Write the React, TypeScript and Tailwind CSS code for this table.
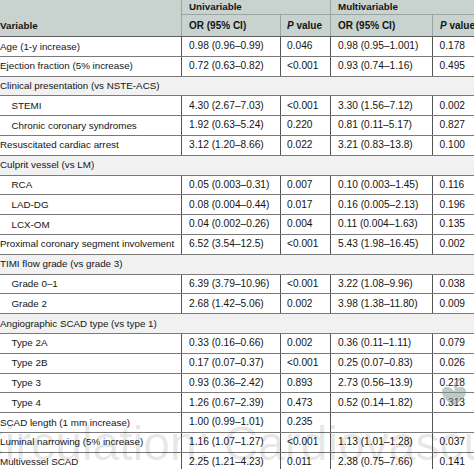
import { clsx } from 'clsx';

type Row =
  | { kind: 'section'; label: string }
  | { kind: 'data'; label: string; indent?: boolean; u: string; up: string; m: string; mp: string };

const rows: Row[] = [
  { kind: 'data', label: 'Age (1-y increase)', u: '0.98 (0.96–0.99)', up: '0.046', m: '0.98 (0.95–1.001)', mp: '0.178' },
  { kind: 'data', label: 'Ejection fraction (5% increase)', u: '0.72 (0.63–0.82)', up: '<0.001', m: '0.93 (0.74–1.16)', mp: '0.495' },
  { kind: 'section', label: 'Clinical presentation (vs NSTE-ACS)' },
  { kind: 'data', indent: true, label: 'STEMI', u: '4.30 (2.67–7.03)', up: '<0.001', m: '3.30 (1.56–7.12)', mp: '0.002' },
  { kind: 'data', indent: true, label: 'Chronic coronary syndromes', u: '1.92 (0.63–5.24)', up: '0.220', m: '0.81 (0.11–5.17)', mp: '0.827' },
  { kind: 'data', label: 'Resuscitated cardiac arrest', u: '3.12 (1.20–8.66)', up: '0.022', m: '3.21 (0.83–13.8)', mp: '0.100' },
  { kind: 'section', label: 'Culprit vessel (vs LM)' },
  { kind: 'data', indent: true, label: 'RCA', u: '0.05 (0.003–0.31)', up: '0.007', m: '0.10 (0.003–1.45)', mp: '0.116' },
  { kind: 'data', indent: true, label: 'LAD-DG', u: '0.08 (0.004–0.44)', up: '0.017', m: '0.16 (0.005–2.13)', mp: '0.196' },
  { kind: 'data', indent: true, label: 'LCX-OM', u: '0.04 (0.002–0.26)', up: '0.004', m: '0.11 (0.004–1.63)', mp: '0.135' },
  { kind: 'data', label: 'Proximal coronary segment involvement', u: '6.52 (3.54–12.5)', up: '<0.001', m: '5.43 (1.98–16.45)', mp: '0.002' },
  { kind: 'section', label: 'TIMI flow grade (vs grade 3)' },
  { kind: 'data', indent: true, label: 'Grade 0–1', u: '6.39 (3.79–10.96)', up: '<0.001', m: '3.22 (1.08–9.96)', mp: '0.038' },
  { kind: 'data', indent: true, label: 'Grade 2', u: '2.68 (1.42–5.06)', up: '0.002', m: '3.98 (1.38–11.80)', mp: '0.009' },
  { kind: 'section', label: 'Angiographic SCAD type (vs type 1)' },
  { kind: 'data', indent: true, label: 'Type 2A', u: '0.33 (0.16–0.66)', up: '0.002', m: '0.36 (0.11–1.11)', mp: '0.079' },
  { kind: 'data', indent: true, label: 'Type 2B', u: '0.17 (0.07–0.37)', up: '<0.001', m: '0.25 (0.07–0.83)', mp: '0.026' },
  { kind: 'data', indent: true, label: 'Type 3', u: '0.93 (0.36–2.42)', up: '0.893', m: '2.73 (0.56–13.9)', mp: '0.218' },
  { kind: 'data', indent: true, label: 'Type 4', u: '1.26 (0.67–2.39)', up: '0.473', m: '0.52 (0.14–1.82)', mp: '0.313' },
  { kind: 'data', label: 'SCAD length (1 mm increase)', u: '1.00 (0.99–1.01)', up: '0.235', m: '', mp: '' },
  { kind: 'data', label: 'Luminal narrowing (5% increase)', u: '1.16 (1.07–1.27)', up: '<0.001', m: '1.13 (1.01–1.28)', mp: '0.037' },
  { kind: 'data', label: 'Multivessel SCAD', u: '2.25 (1.21–4.23)', up: '0.011', m: '2.38 (0.75–7.66)', mp: '0.141' },
];

function AhaMark() {
  return (
    <svg viewBox="0 0 26 30" className="h-[30px] w-[26px]" fill="#7f968f">
      {/* torch flame */}
      <path d="M14 13 C12 9 13 5 17 2 C19 1 21 0.5 22 0 C21 2 18 3 17 5 C16 7 17 10 16 13 Z" />
      {/* heart */}
      <path d="M13 29 C6 24 1 20 1 15 C1 12 3 10 6 10 C9 10 11 12 13 14 C15 12 17 10 20 10 C23 10 25 12 25 15 C25 20 20 24 13 29 Z" />
    </svg>
  );
}

export default function App() {
  return (
    <div className="relative h-[469px] w-[474px] overflow-hidden whitespace-nowrap bg-white font-['Liberation_Sans',Arial,sans-serif] text-[9.8px] leading-none text-[#141414]">
      <div className="w-[520px]">
        <header className="flex h-[37px] border-b border-[#5c5c5c] bg-[#c8d2cf] font-bold">
          <div className="flex w-[182px] items-end border-r border-[#9aa5a2] pb-[5px]">Variable</div>
          <div className="flex flex-1 flex-col">
            <div className="flex h-[15px] border-b border-[#9aa5a2]">
              <div className="flex w-[149px] items-center border-r border-[#9aa5a2] pl-[7px]">Univariable</div>
              <div className="flex flex-1 items-center pl-[7px]">Multivariable</div>
            </div>
            <div className="flex flex-1 text-[10px]">
              <div className="flex w-[99px] items-center border-r border-[#9aa5a2] pl-[7px]">OR (95% CI)</div>
              <div className="flex w-[50px] items-center border-r border-[#9aa5a2] pl-[6px]">
                <i>P</i>&nbsp;value
              </div>
              <div className="flex w-[102px] items-center border-r border-[#9aa5a2] pl-[7px]">OR (95% CI)</div>
              <div className="flex flex-1 items-center pl-[7px]">
                <i>P</i>&nbsp;value
              </div>
            </div>
          </div>
        </header>

        {rows.map((row, i) =>
          row.kind === 'section' ? (
            <div key={i} className="flex h-[19.8px] items-center border-b border-[#7a7a7a] bg-[#f1f1f1]">
              {row.label}
            </div>
          ) : (
            <div key={i} className="flex h-[19.8px] border-b border-[#7a7a7a]">
              <div className={clsx('flex w-[182px] items-center border-r border-[#555]', row.indent && 'pl-[11.5px]')}>
                {row.label}
              </div>
              <div className="flex w-[99px] items-center border-r border-[#555] pl-[7px] text-[10.2px]">{row.u}</div>
              <div className="flex w-[50px] items-center border-r border-[#555] pl-[6px] text-[10.2px]">{row.up}</div>
              <div className="flex w-[102px] items-center border-r border-[#555] pl-[7px] text-[10.2px]">{row.m}</div>
              <div className="flex flex-1 items-center pl-[6.5px] text-[10.2px]">{row.mp}</div>
            </div>
          )
        )}
      </div>

      {/* journal watermark */}
      <div className="pointer-events-none absolute left-[-30px] top-[420px] text-[48px] leading-none text-black/[0.1]">
        Circulation: Cardiovascular Interventions
      </div>
      <div className="pointer-events-none absolute left-[441px] top-[377px] opacity-50">
        <AhaMark />
      </div>
    </div>
  );
}
